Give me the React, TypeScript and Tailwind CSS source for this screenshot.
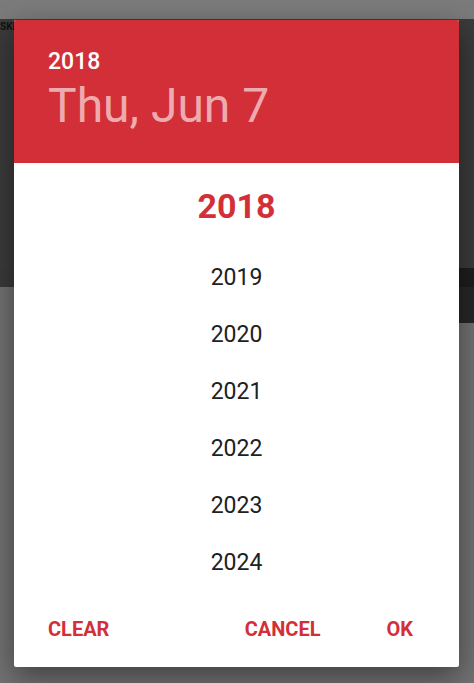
import React from 'react';

const YEARS = [2019, 2020, 2021, 2022, 2023, 2024];

const font = { fontFamily: 'Roboto, "Noto Sans", sans-serif' };

export default function App() {
  return (
    <div className="relative h-[683px] w-[474px] overflow-hidden bg-[#727272]" style={font}>
      {/* page behind the overlay */}
      <div className="h-[19px] bg-[#7b7b7b]" />
      <div className="h-[249px] bg-[#3b3b3b] pt-[3px]">
        <span className="block text-[10px] font-bold leading-none text-[#111]">SKI</span>
      </div>
      <div className="flex h-[19px]">
        <div className="flex-1 bg-[#3a3a3a]" />
        <div className="flex-1 bg-[#1e1e1e]" />
      </div>
      <div className="flex h-[36px]">
        <div className="flex-1 bg-[#727272]" />
        <div className="flex-1 bg-[#272727]" />
      </div>

      {/* date picker dialog */}
      <div className="absolute left-[14px] top-[20px] flex h-[647px] w-[445px] flex-col overflow-hidden rounded-[2px] bg-white shadow-[0_10px_30px_rgba(0,0,0,0.45)]">
        <div className="h-[143px] shrink-0 bg-[#d32f38] px-[34px] pt-[30px]">
          <div className="text-[23px] font-medium leading-none text-white">2018</div>
          <div className="mt-[9px] text-[48px] leading-none text-[#eeabaf]">Thu, Jun 7</div>
        </div>

        <div className="flex flex-col items-center">
          <div className="flex h-[86px] items-center text-[34px] font-bold leading-none text-[#d32f38]">2018</div>
          {YEARS.map((y) => (
            <div key={y} className="flex h-[57px] items-center text-[23px] leading-none text-[#212121]">
              {y}
            </div>
          ))}
        </div>

        <div className="mt-auto flex h-[76px] items-center pl-[34px] pr-[46px] text-[20px] font-bold leading-none text-[#d32f38]">
          <button>CLEAR</button>
          <div className="flex-1" />
          <button>CANCEL</button>
          <button className="ml-[66px]">OK</button>
        </div>
      </div>
    </div>
  );
}
